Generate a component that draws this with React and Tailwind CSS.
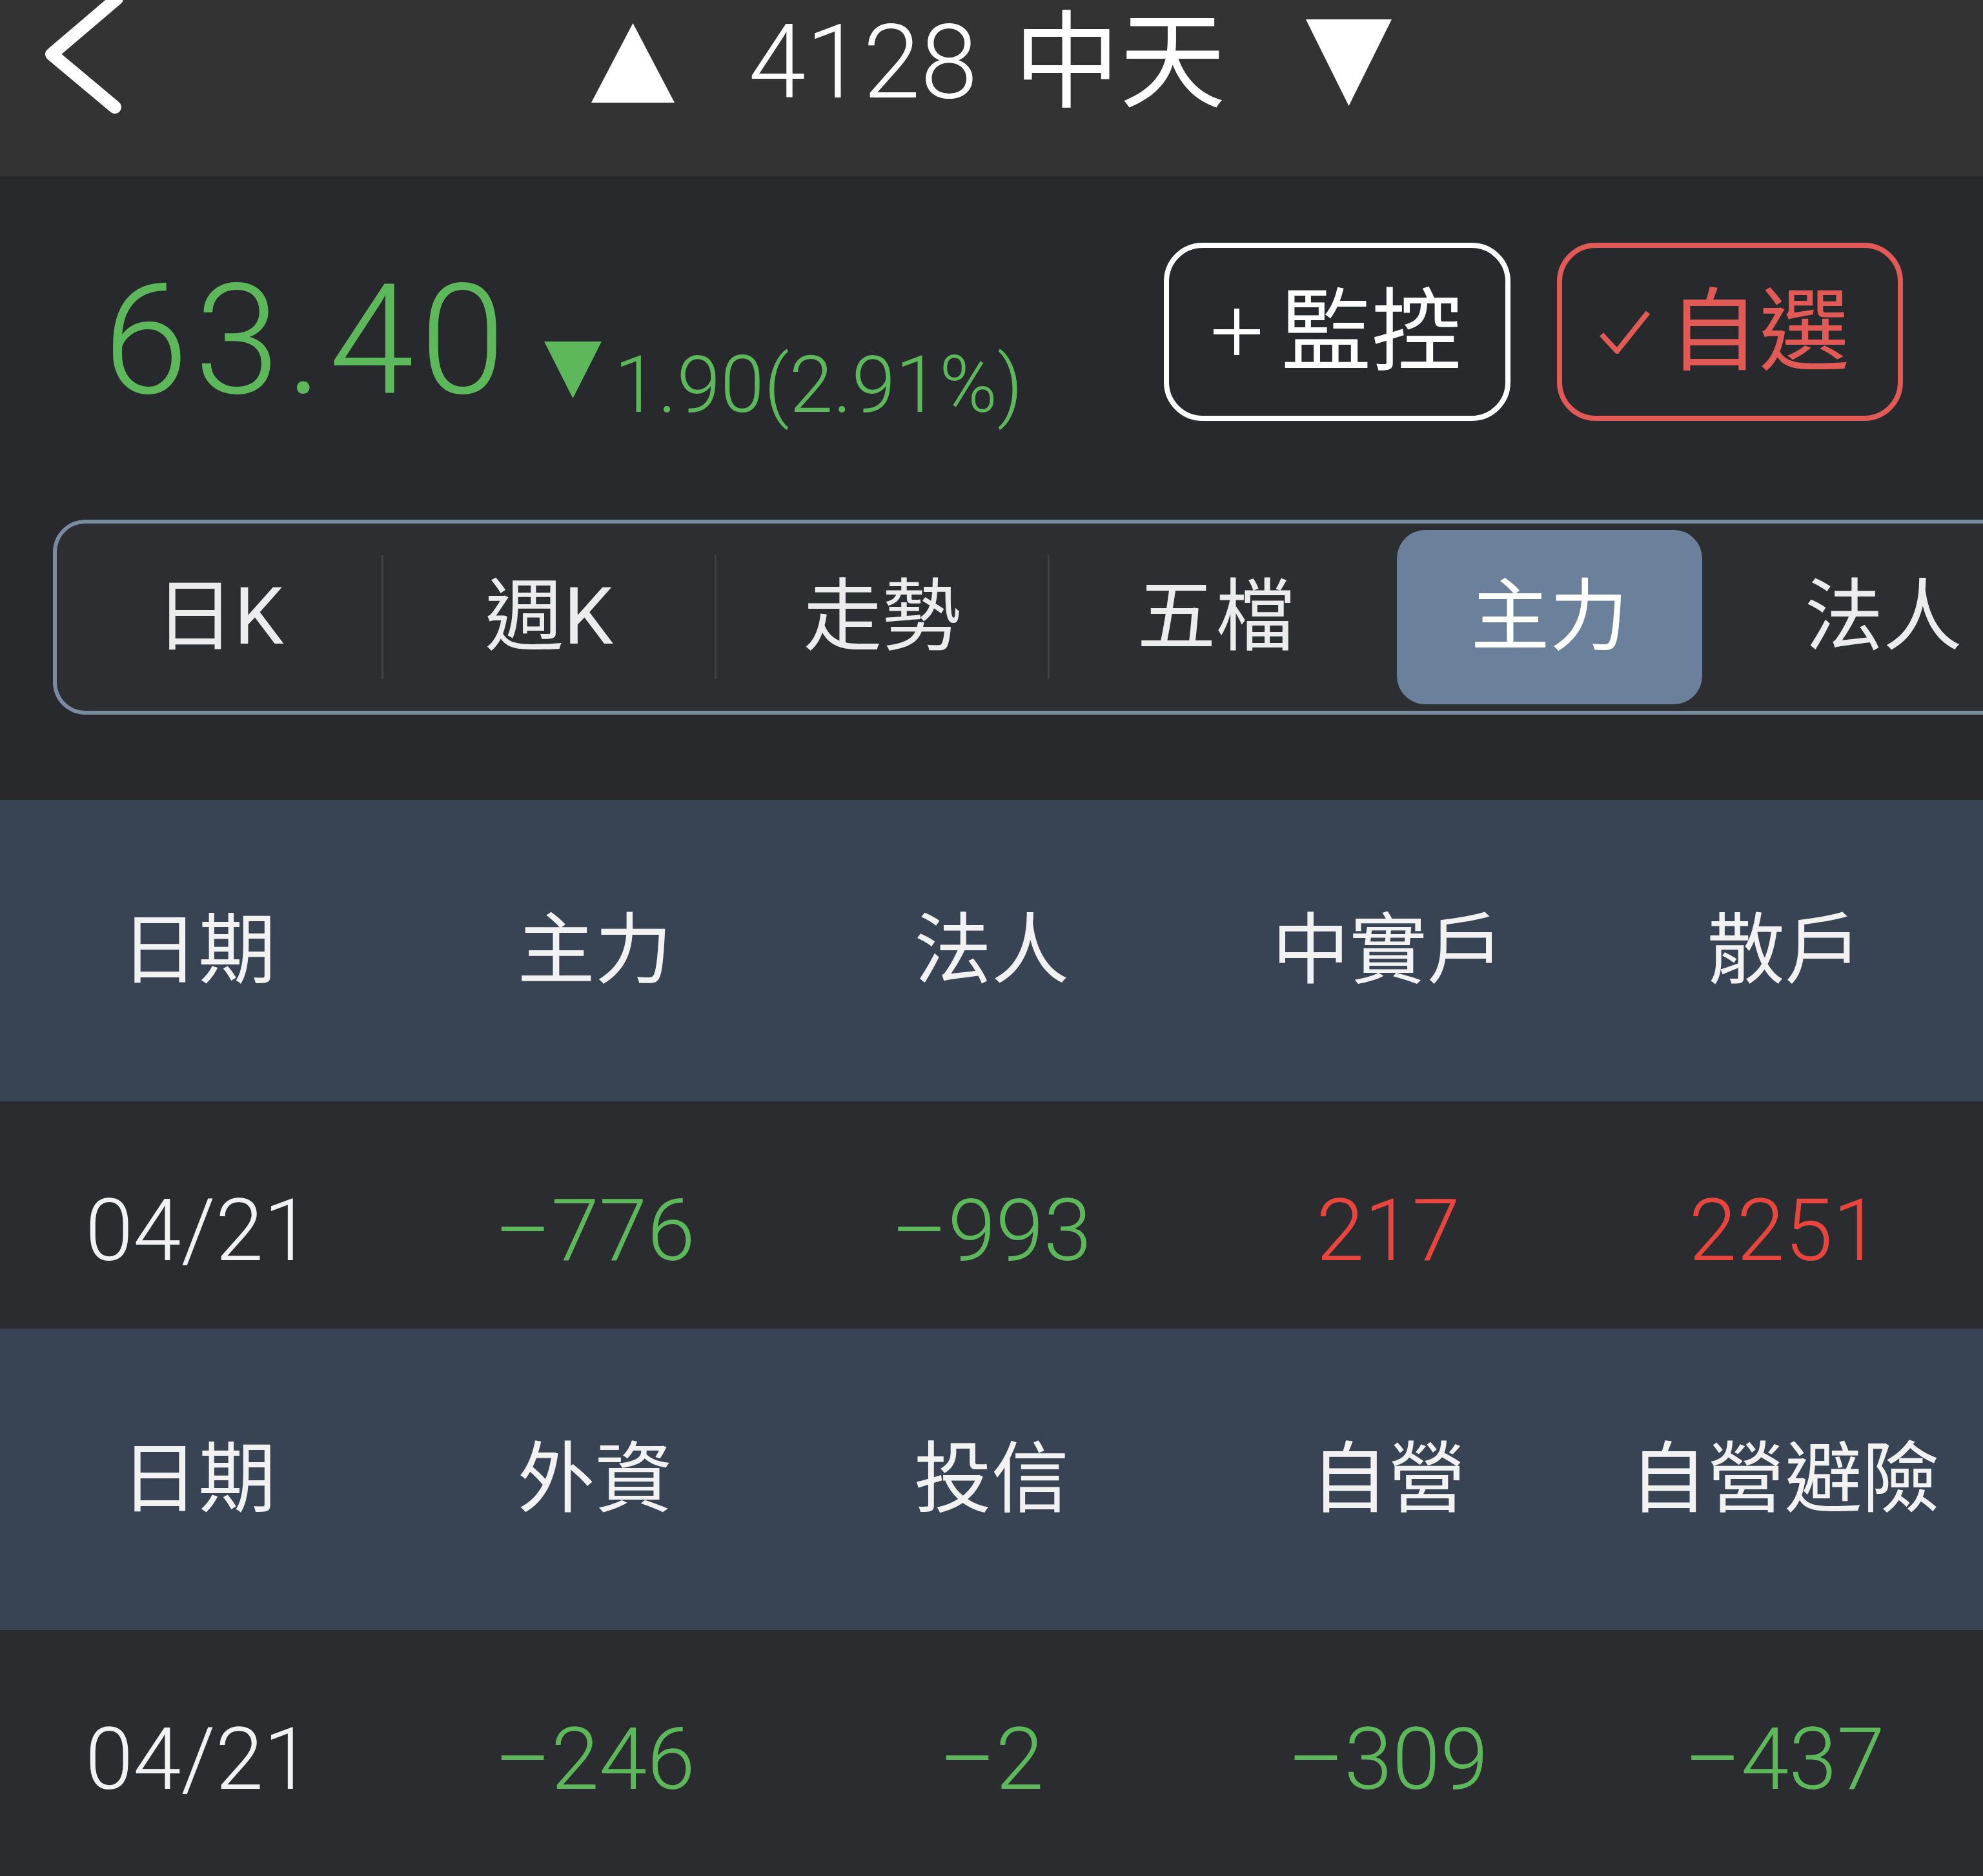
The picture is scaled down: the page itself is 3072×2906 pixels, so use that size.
import React from "react";

const tabs = [
  { label: "日K", w: "w-[504px]", divider: true },
  { label: "週K", w: "w-[515px]", divider: true },
  { label: "走勢", w: "w-[515px]", divider: true },
  { label: "五檔", w: "w-[517px]" },
  { label: "主力", w: "w-[517px]", active: true },
  { label: "法人", w: "w-[517px]" },
];

const table1 = {
  head: ["日期", "主力", "法人", "中實戶", "散戶"],
  row: [
    { v: "04/21", c: "text-[#f2f2f2]" },
    { v: "–776", c: "text-[#5cb85a]" },
    { v: "–993", c: "text-[#5cb85a]" },
    { v: "217", c: "text-[#e9453f]" },
    { v: "2251", c: "text-[#e9453f]" },
  ],
};

const table2 = {
  head: ["日期", "外資", "投信", "自營", "自營避險"],
  row: [
    { v: "04/21", c: "text-[#f2f2f2]" },
    { v: "–246", c: "text-[#5cb85a]" },
    { v: "–2", c: "text-[#5cb85a]" },
    { v: "–309", c: "text-[#5cb85a]" },
    { v: "–437", c: "text-[#5cb85a]" },
  ],
};

const HeadRow = ({ cells }) => (
  <div className="grid grid-cols-5 h-[467px] bg-[#384453] items-center">
    {cells.map((c, i) => (
      <div key={i} className="text-center text-[120px] leading-none font-normal text-[#f2f2f2]">
        {c}
      </div>
    ))}
  </div>
);

const DataRow = ({ cells, h }) => (
  <div className={`grid grid-cols-5 ${h} bg-[#2b2c30] items-start pt-[134px]`}>
    {cells.map((c, i) => (
      <div key={i} className={`text-center text-[134px] leading-none ${c.c}`}>
        {c.v}
      </div>
    ))}
  </div>
);

export default function App() {
  return (
    <div className="w-[3072px] h-[2906px] overflow-hidden bg-[#28292d] font-light font-['Roboto','Noto_Sans_CJK_TC',sans-serif]">
      {/* nav bar */}
      <div className="relative h-[273px] bg-[#333333]">
        <svg className="absolute left-0 top-0" width="220" height="200">
          <polyline
            points="181,-2 80,84 178,166"
            fill="none"
            stroke="#ffffff"
            strokeWidth="20"
            strokeLinecap="round"
            strokeLinejoin="round"
          />
        </svg>
        <div className="flex justify-center items-center h-[188px] pt-[6px] text-white">
          <svg width="129" height="123" viewBox="0 0 129 123">
            <polygon points="64.5,0 129,123 0,123" fill="#ffffff" />
          </svg>
          <span className="ml-[114px] text-[160px] leading-none">4128</span>
          <span className="ml-[56px] text-[164px] leading-none font-normal">中天</span>
          <svg className="ml-[124px]" width="133" height="134" viewBox="0 0 133 134">
            <polygon points="0,0 133,0 66.5,134" fill="#ffffff" />
          </svg>
        </div>
      </div>

      {/* price + buttons */}
      <div className="flex justify-between items-start pt-[103px]">
        <div className="flex items-start pl-[160px]">
          <span className="mt-[34px] text-[237px] leading-none tracking-[10px] text-[#5cb85a]">63.40</span>
          <svg className="ml-[50px] mt-[153px]" width="89" height="88" viewBox="0 0 89 88">
            <polygon points="0,0 89,0 44.5,88" fill="#5cb85a" />
          </svg>
          <span className="ml-[20px] mt-[160px] text-[122px] leading-none text-[#5cb85a]">
            1.90(2.91%)
          </span>
        </div>
        <div className="flex gap-[72px] pr-[124px]">
          <button className="w-[537px] h-[276px] border-[8px] border-white rounded-[60px] flex items-center justify-center text-white">
            <svg width="76" height="76" viewBox="0 0 76 76">
              <path d="M38 2 V74 M2 38 H74" stroke="#ffffff" strokeWidth="8" />
            </svg>
            <span className="ml-[30px] text-[140px] leading-[1.1] font-normal">監控</span>
          </button>
          <button className="w-[536px] h-[276px] border-[8px] border-[#e25a56] rounded-[60px] flex items-center justify-start pl-[57px] text-[#e25a56]">
            <svg width="80" height="68" viewBox="0 0 80 68">
              <polyline points="4,38 28,64 76,4" fill="none" stroke="#e25a56" strokeWidth="8" />
            </svg>
            <span className="ml-[28px] text-[140px] leading-[1.1] font-normal">自選</span>
          </button>
        </div>
      </div>

      {/* tabs */}
      <div className="mt-[147px] ml-[82px] w-[3100px] h-[302px] flex border-[6px] border-r-0 border-[#7a8aa1] rounded-l-[50px] bg-[#2d2e32]">
        {tabs.map((t) => (
          <React.Fragment key={t.label}>
            <div className={`${t.w} flex-none flex`}>
              <div
                className={`flex-1 flex items-center justify-center text-[122px] leading-[1.1] font-normal text-[#ececec] ${
                  t.active ? "bg-[#6b809b] rounded-[44px] mx-[22px] my-[10px] text-white" : ""
                }`}
              >
                {t.label}
              </div>
            </div>
            {t.divider && <div className="w-[3px] h-[192px] self-center bg-[#3f4146] -mx-[1px] flex-none" />}
          </React.Fragment>
        ))}
      </div>

      {/* tables */}
      <div className="mt-[132px]">
        <HeadRow cells={table1.head} />
        <DataRow cells={table1.row} h="h-[352px]" />
        <HeadRow cells={table2.head} />
        <DataRow cells={table2.row} h="h-[400px]" />
      </div>
    </div>
  );
}
